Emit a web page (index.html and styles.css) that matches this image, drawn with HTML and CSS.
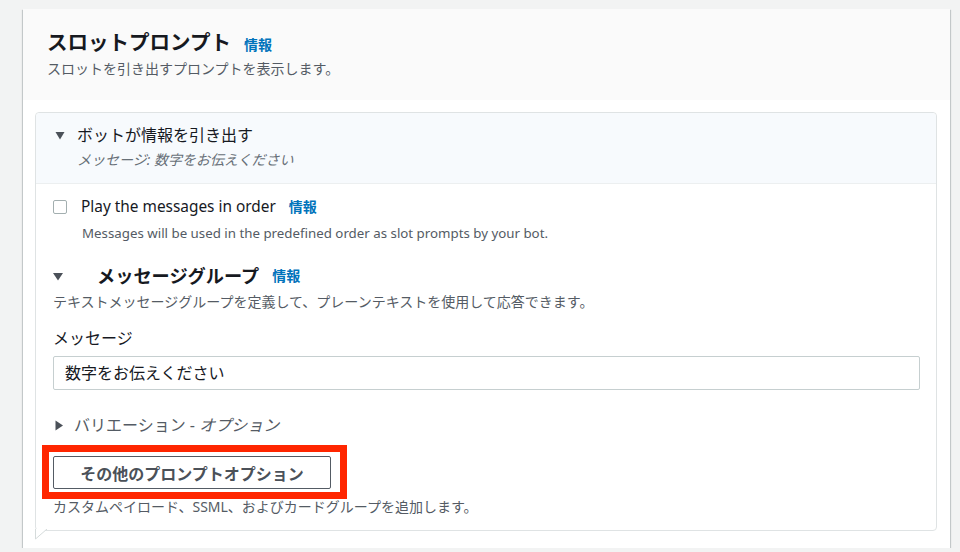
FILE: index.html
```html
<!DOCTYPE html>
<html lang="ja">
<head>
    <meta charset="UTF-8">
    <meta name="viewport" content="width=device-width, initial-scale=1.0">
    <title>スロットプロンプト</title>
    <link rel="stylesheet" href="styles.css">
</head>
<body>
    <div class="page">
        <div class="panel">
            <div class="panel-header">
                <h2 class="panel-title">スロットプロンプト<a class="info" href="#">情報</a></h2>
                <p class="panel-desc">スロットを引き出すプロンプトを表示します。</p>
            </div>

            <div class="panel-body">
                <div class="card">
                    <div class="card-header">
                        <div class="card-title">
                            <svg class="caret" width="10" height="9" viewBox="0 0 10 9"><path d="M0.5 1h9L5 8.5z" fill="#4b5159"/></svg>
                            <span>ボットが情報を引き出す</span>
                        </div>
                        <div class="card-sub">メッセージ: 数字をお伝えください</div>
                    </div>

                    <div class="card-content">
                        <label class="check-row">
                            <span class="checkbox"></span>
                            <span class="check-label">Play the messages in order</span>
                            <a class="info" href="#">情報</a>
                        </label>
                        <div class="check-desc">Messages will be used in the predefined order as slot prompts by your bot.</div>

                        <div class="group-title">
                            <svg class="caret" width="10" height="9" viewBox="0 0 10 9"><path d="M0 1h10L5 8.5z" fill="#4b5159"/></svg>
                            <span class="group-name">メッセージグループ</span>
                            <a class="info" href="#">情報</a>
                        </div>
                        <div class="group-desc">テキストメッセージグループを定義して、プレーンテキストを使用して応答できます。</div>

                        <div class="field-label">メッセージ</div>
                        <div class="text-input">数字をお伝えください</div>

                        <div class="variation">
                            <svg class="caret" width="9" height="11" viewBox="0 0 9 11"><path d="M0.5 0.5v10L8 5.5z" fill="#4b5159"/></svg>
                            <span>バリエーション - <i>オプション</i></span>
                        </div>

                        <div class="button-wrap">
                            <button class="btn">その他のプロンプトオプション</button>
                            <div class="highlight"></div>
                        </div>
                        <div class="btn-desc">カスタムペイロード、SSML、およびカードグループを追加します。</div>
                    </div>

                    <svg class="tail" width="14" height="11" viewBox="0 0 14 11"><path d="M0.5 0V10L12 0" fill="#fff" stroke="#d5dbdb"/></svg>
                </div>
            </div>
        </div>
    </div>
</body>
</html>
```

FILE: styles.css
```css
body {
    margin: 0;
    background-color: #f2f3f3;
    font-family: "Noto Sans", "Noto Sans CJK JP", sans-serif;
    color: #16191f;
}
.page {
    padding: 9px 10px 0 23px;
}
.panel {
    width: 927px;
    background-color: white;
    box-shadow: 0 1px 1px 0 rgba(0, 28, 36, 0.3), 1px 1px 1px 0 rgba(0, 28, 36, 0.15), -1px 1px 1px 0 rgba(0, 28, 36, 0.15);
}
.panel-header {
    background-color: #fafafa;
    padding: 19px 24px 21px;
}
.panel-title {
    display: flex;
    align-items: baseline;
    margin: 0;
    font-size: 20.5px;
    line-height: 28px;
    font-weight: bold;
}
.panel-title .info {
    margin-left: 13px;
    line-height: 20px;
}
.panel-desc {
    margin: 3px 0 0;
    font-size: 14px;
    line-height: 20px;
    color: #545b64;
}
.info {
    font-size: 14px;
    font-weight: bold;
    color: #0073bb;
    text-decoration: none;
}

.panel-body {
    padding: 12px 13px 17px 12px;
}
.card {
    position: relative;
    border: 1px solid #dfe3e4;
    border-radius: 4px;
}
.card-header {
    background-color: #f7fafd;
    padding: 10px 19px 13px;
    border-bottom: 1px solid #eceff0;
    border-radius: 4px 4px 0 0;
}
.card-title {
    display: flex;
    align-items: center;
    gap: 12px;
    font-size: 16px;
    line-height: 24px;
}
.card-sub {
    margin: 3px 0 0 22px;
    font-size: 14px;
    line-height: 20px;
    font-style: italic;
    color: #687078;
}

.card-content {
    padding: 12px 16px 13px 17px;
}
.check-row {
    display: flex;
    align-items: center;
    line-height: 22px;
}
.checkbox {
    width: 14px;
    height: 14px;
    border: 1px solid #a3afb0;
    border-radius: 2px;
    box-sizing: border-box;
    margin-right: 14px;
}
.check-label {
    font-size: 15.4px;
    margin-right: 13px;
}
.check-desc {
    margin: 6px 0 0 29px;
    font-size: 13.3px;
    line-height: 18px;
    color: #545b64;
}

.group-title {
    display: flex;
    align-items: center;
    margin-top: 21px;
    line-height: 26px;
}
.group-title .caret {
    margin-right: 34px;
}
.group-name {
    font-size: 18.2px;
    font-weight: bold;
    margin-right: 13px;
}
.group-desc {
    margin-top: 3px;
    font-size: 14px;
    line-height: 20px;
    color: #545b64;
}
.field-label {
    margin-top: 15px;
    font-size: 16px;
    line-height: 22px;
}
.text-input {
    margin-top: 7px;
    height: 34px;
    box-sizing: border-box;
    border: 1px solid #c6cfd0;
    border-radius: 2px;
    padding: 0 11px;
    font-size: 16px;
    line-height: 32px;
}

.variation {
    display: flex;
    align-items: center;
    gap: 10px;
    margin-top: 24px;
    padding-left: 2px;
    font-size: 16px;
    line-height: 22px;
    color: #545b64;
}

.button-wrap {
    position: relative;
    width: 278px;
    margin-top: 20px;
}
.btn {
    display: block;
    width: 278px;
    height: 33px;
    padding: 0;
    background: white;
    border: 1px solid #545b64;
    border-radius: 2px;
    font-family: inherit;
    font-size: 16px;
    font-weight: bold;
    color: #4b5159;
}
.highlight {
    position: absolute;
    left: -11px;
    top: -11px;
    width: 305px;
    height: 54px;
    box-sizing: border-box;
    border: 7px solid #ff2600;
}
.btn-desc {
    margin-top: 8px;
    font-size: 14px;
    line-height: 20px;
    color: #545b64;
}
.tail {
    position: absolute;
    left: -1px;
    top: 100%;
    margin-top: -1px;
}
```
